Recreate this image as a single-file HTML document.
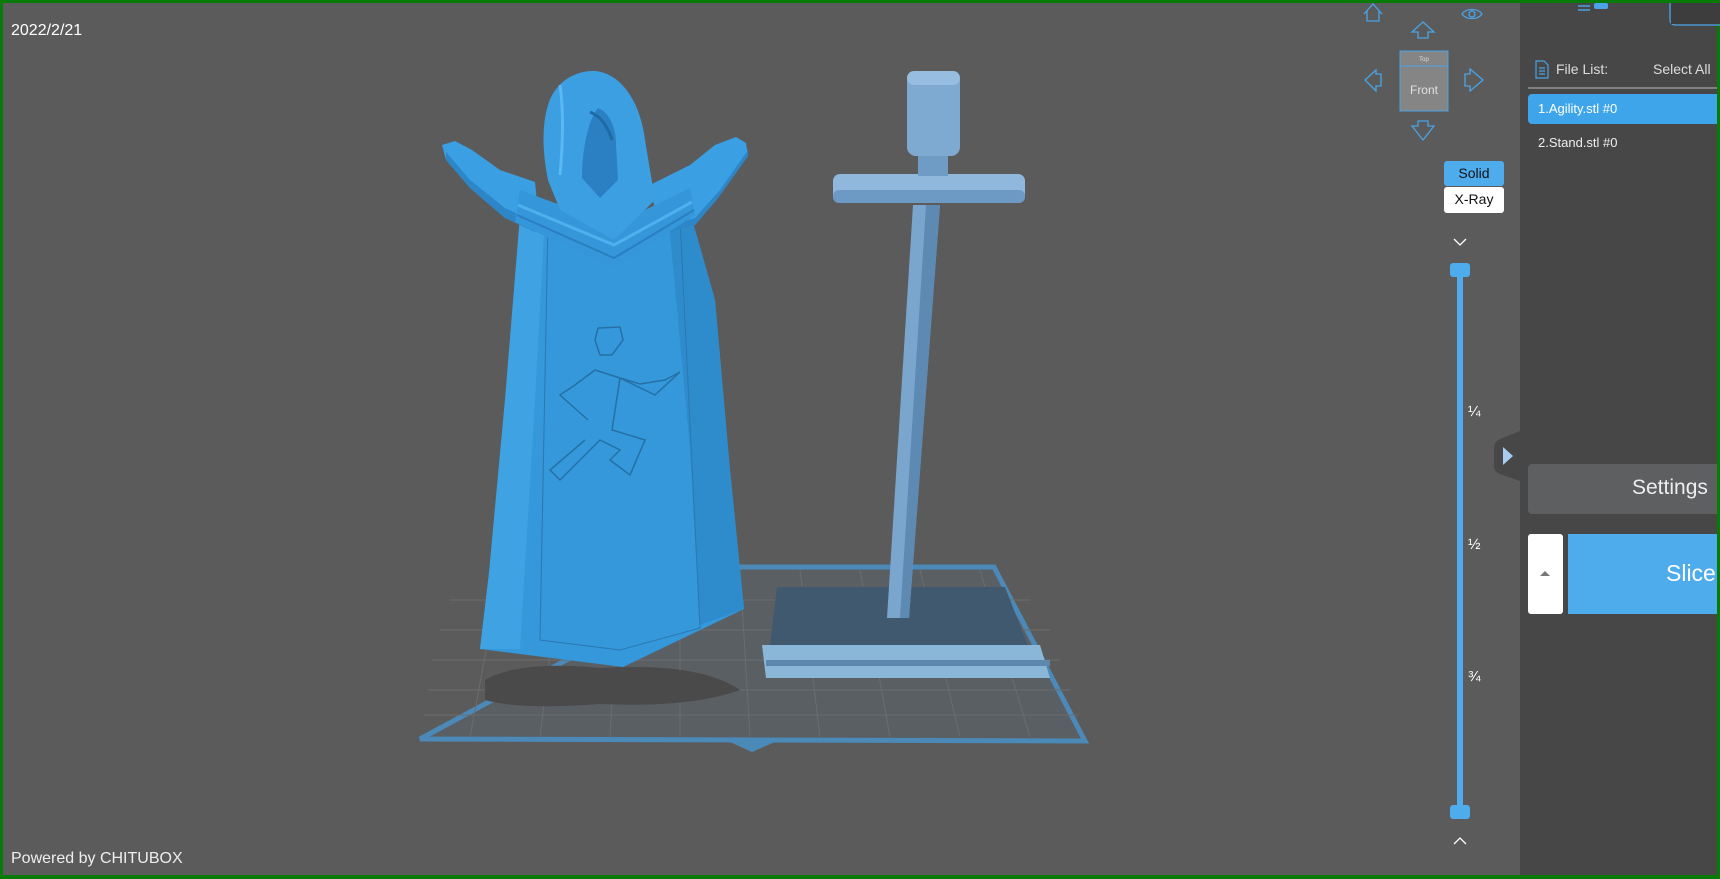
<!DOCTYPE html>
<html><head><meta charset="utf-8"><style>
*{margin:0;padding:0;box-sizing:border-box}
body{width:1720px;height:879px;overflow:hidden;background:#077a07;font-family:"Liberation Sans",sans-serif;position:relative}
#vp{position:absolute;left:3px;top:3px;width:1517px;height:872px;background:#5b5b5b}
#panel{position:absolute;left:1520px;top:3px;width:197px;height:872px;background:#474747}
.t{position:absolute;color:#fff;white-space:nowrap}
</style></head><body>
<div id="vp"></div>
<div id="panel"></div>
<div class="t" style="left:11px;top:22px;font-size:16px">2022/2/21</div>
<div class="t" style="left:11px;top:850px;font-size:16px;color:#eee">Powered by CHITUBOX</div>

<svg style="position:absolute;left:0;top:0" width="1720" height="879">
 <!-- plate -->
 <polygon points="739,567 994,567 1085,741 420,739" fill="#5a5f64" stroke="#4a89b8" stroke-width="5"/>
 <g stroke="#6c6c6c" stroke-width="1">
  <line x1="450" y1="600" x2="1030" y2="600"/><line x1="440" y1="630" x2="1050" y2="630"/>
  <line x1="432" y1="660" x2="1060" y2="660"/><line x1="428" y1="690" x2="1070" y2="690"/>
  <line x1="424" y1="715" x2="1078" y2="715"/>
  <line x1="500" y1="575" x2="470" y2="737"/><line x1="560" y1="570" x2="540" y2="737"/>
  <line x1="620" y1="570" x2="610" y2="737"/><line x1="680" y1="570" x2="680" y2="737"/>
  <line x1="740" y1="570" x2="750" y2="737"/><line x1="800" y1="570" x2="820" y2="737"/>
  <line x1="860" y1="570" x2="890" y2="737"/><line x1="920" y1="570" x2="960" y2="737"/>
  <line x1="980" y1="570" x2="1030" y2="737"/>
 </g>
 <polygon points="730,742 775,742 752,752" fill="#4a89b8"/>
 <!-- shadow -->
 <path d="M485,680 Q520,660 600,668 Q700,662 740,690 Q690,708 600,704 Q520,710 485,700 Z" fill="#4a4a4a"/>
 <!-- cloak -->
 <polygon points="520,216 690,212 715,300 730,470 744,609 623,667 480,649 489,573 505,400" fill="#3498db"/>
 <polygon points="520,216 545,216 535,400 520,649 480,649 489,573 505,400" fill="#3fa2e2"/>
 <polygon points="668,212 690,212 715,300 730,470 744,609 700,625 690,450" fill="#2e8ccd"/>
 <polyline points="548,220 540,640 620,650 700,628 680,220" fill="none" stroke="#2b78b0" stroke-width="1"/>
 <!-- runner -->
 <polyline points="598,328 620,327 623,340 612,355 600,355 595,340 598,328" fill="none" stroke="#2670a5" stroke-width="1.5"/>
 <polyline points="588,420 560,395 575,385 595,370 620,378 655,395 680,372 665,380 640,384 620,378 612,430 645,440 630,475 610,460 620,450 600,440 560,480 550,470 585,440" fill="none" stroke="#2670a5" stroke-width="1.5"/>
 <!-- wings -->
 <polygon points="442,145 455,141 472,150 500,170 535,182 540,232 505,218 470,188 446,160" fill="#3a9fe3"/>
 <polygon points="446,152 470,180 505,208 535,222 535,232 505,218 470,188 446,160" fill="#2d86c8"/>
 <polygon points="746,143 736,137 715,145 690,165 650,185 660,235 695,225 718,198 748,156" fill="#3a9fe3"/>
 <polygon points="748,150 720,190 695,218 660,228 660,235 695,225 718,198 748,156" fill="#2d86c8"/>
 <!-- collar -->
 <polygon points="520,190 614,225 690,188 695,215 614,268 515,222" fill="#3596da"/>
 <polyline points="518,205 614,245 692,202" fill="none" stroke="#4fb0ee" stroke-width="3"/>
 <polyline points="517,215 614,258 694,210" fill="none" stroke="#2a7fc0" stroke-width="2"/>
 <!-- hood -->
 <path d="M548,105 C555,82 575,70 595,71 C620,73 640,100 645,140 L655,200 L614,240 L560,210 L548,180 C542,150 542,125 548,105 Z" fill="#3b9fe2"/>
 <path d="M598,108 C608,112 616,125 616,145 L618,180 L600,198 L582,178 C582,150 588,120 598,108 Z" fill="#2a80c2"/>
 <path d="M590,112 Q605,118 612,140" fill="none" stroke="#1f6aa5" stroke-width="3"/>
 <path d="M560,85 Q565,120 560,175" fill="none" stroke="#5ab8f2" stroke-width="3"/>
 <!-- stand -->
 <polygon points="777,587 1005,587 1029,649 770,645" fill="#41596f"/>
 <polygon points="762,645 1040,645 1050,678 766,678" fill="#8ab6d8"/>
 <rect x="766" y="660" width="284" height="6" fill="#5d87ad"/>
 <polygon points="913,205 940,205 909,618 887,618" fill="#7aa5cc"/>
 <polygon points="926,205 940,205 909,618 900,618" fill="#5d8ab3"/>
 <rect x="833" y="174" width="192" height="29" rx="7" fill="#8fb8dc"/>
 <rect x="833" y="190" width="192" height="13" rx="6" fill="#6d9ac4"/>
 <rect x="918" y="150" width="30" height="26" fill="#6f9cc5"/>
 <rect x="907" y="71" width="53" height="85" rx="9" fill="#7ea9d0"/>
 <rect x="907" y="71" width="53" height="14" rx="7" fill="#97bde0"/>

 <!-- nav icons -->
 <g fill="none" stroke="#4aa3e6" stroke-width="1.3">
  <path d="M1364,14 L1373,4 L1382,14 M1367,11 V21 H1379 V11"/>
  <path d="M1462,14 C1466,8 1478,8 1482,14 C1478,20 1466,20 1462,14 Z"/><circle cx="1472" cy="14" r="3"/>
  <path d="M1412,32 L1423,22 L1434,32 H1428 V38 H1418 V32 Z"/>
  <path d="M1412,126 L1423,140 L1434,126 H1428 V121 H1418 V126 Z"/>
  <path d="M1376,70 L1365,80 L1376,91 V86 H1381 V74 H1376 Z"/>
  <path d="M1470,69 L1483,80 L1470,91 V86 H1465 V74 H1470 Z"/>
 </g>
 <rect x="1400" y="51" width="48" height="60" fill="#858585" stroke="#4aa3e6" stroke-width="1"/>
 <line x1="1400" y1="66" x2="1448" y2="66" stroke="#4aa3e6"/>
 <text x="1424" y="61" font-size="6" fill="#ddd" text-anchor="middle" font-family="Liberation Sans">Top</text>
 <text x="1424" y="94" font-size="12" fill="#e0e0e0" text-anchor="middle" font-family="Liberation Sans">Front</text>
 <path d="M1454,239 L1460,245 L1466,239" fill="none" stroke="#fff" stroke-width="1.3"/>
 <path d="M1454,844 L1460,838 L1466,844" fill="none" stroke="#fff" stroke-width="1.3"/>
 <!-- slider -->
 <rect x="1457" y="270" width="6" height="540" fill="#4eaced"/>
 <rect x="1450" y="263" width="20" height="14" rx="3" fill="#4eaced"/>
 <rect x="1450" y="805" width="20" height="14" rx="3" fill="#4eaced"/>
 <text x="1468" y="416" font-size="15" fill="#fff" font-family="Liberation Sans">¼</text>
 <text x="1468" y="549" font-size="15" fill="#fff" font-family="Liberation Sans">½</text>
 <text x="1468" y="681" font-size="15" fill="#fff" font-family="Liberation Sans">¾</text>
 <!-- tab arrow -->
 <path d="M1520,431 L1500,439 Q1494,442 1494,448 L1494,466 Q1494,472 1500,474 L1520,481 Z" fill="#474747"/>
 <polygon points="1503,447 1513,456 1503,465" fill="#a8cdf0"/>
 <!-- panel top -->
 <g stroke="#4aa3e6" stroke-width="1.5"><line x1="1578" y1="6" x2="1590" y2="6"/><line x1="1578" y1="10" x2="1590" y2="10"/></g>
 <rect x="1594" y="3" width="14" height="6" rx="2" fill="#4aa3e6"/>
 <path d="M1670,3 V19 Q1670,25 1676,25 H1720" fill="none" stroke="#4aa3e6" stroke-width="1.3"/>
 <rect x="1671" y="3" width="49" height="21" fill="#3d3d3d"/>
 <!-- file icon -->
 <path d="M1536,61 H1544 L1548,65 V78 H1536 Z M1539,68 H1545 M1539,71 H1545 M1539,74 H1545" fill="none" stroke="#4aa3e6" stroke-width="1.2"/>
 <line x1="1528" y1="88" x2="1717" y2="88" stroke="#bbb" stroke-width="1"/>
</svg>

<div class="t" style="left:1556px;top:61px;font-size:14px;color:#ddd">File List:</div>
<div class="t" style="left:1653px;top:61px;font-size:14px;color:#ddd">Select All</div>
<div style="position:absolute;left:1528px;top:94px;width:189px;height:30px;background:#3fa5ea;border-radius:4px 0 0 4px"></div>
<div class="t" style="left:1538px;top:101px;font-size:13px">1.Agility.stl #0</div>
<div class="t" style="left:1538px;top:135px;font-size:13px;color:#eee">2.Stand.stl #0</div>

<div style="position:absolute;left:1444px;top:161px;width:60px;height:25px;background:#4eaced;border-radius:3px"></div>
<div class="t" style="left:1444px;top:165px;width:60px;text-align:center;font-size:14px;color:#111">Solid</div>
<div style="position:absolute;left:1444px;top:187px;width:60px;height:26px;background:#fff;border-radius:3px"></div>
<div class="t" style="left:1444px;top:191px;width:60px;text-align:center;font-size:14px;color:#111">X-Ray</div>

<div style="position:absolute;left:1528px;top:464px;width:189px;height:50px;background:#5e5f61;border-radius:4px 0 0 4px"></div>
<div class="t" style="left:1632px;top:476px;font-size:21px;color:#eee">Settings</div>
<div style="position:absolute;left:1528px;top:534px;width:35px;height:80px;background:#fff;border-radius:3px"></div>
<div style="position:absolute;left:1540px;top:571px;width:0;height:0;border-left:5px solid transparent;border-right:5px solid transparent;border-bottom:5px solid #777"></div>
<div style="position:absolute;left:1568px;top:534px;width:149px;height:80px;background:#4eaced"></div>
<div class="t" style="left:1666px;top:560px;font-size:23px">Slice</div>
</body></html>
